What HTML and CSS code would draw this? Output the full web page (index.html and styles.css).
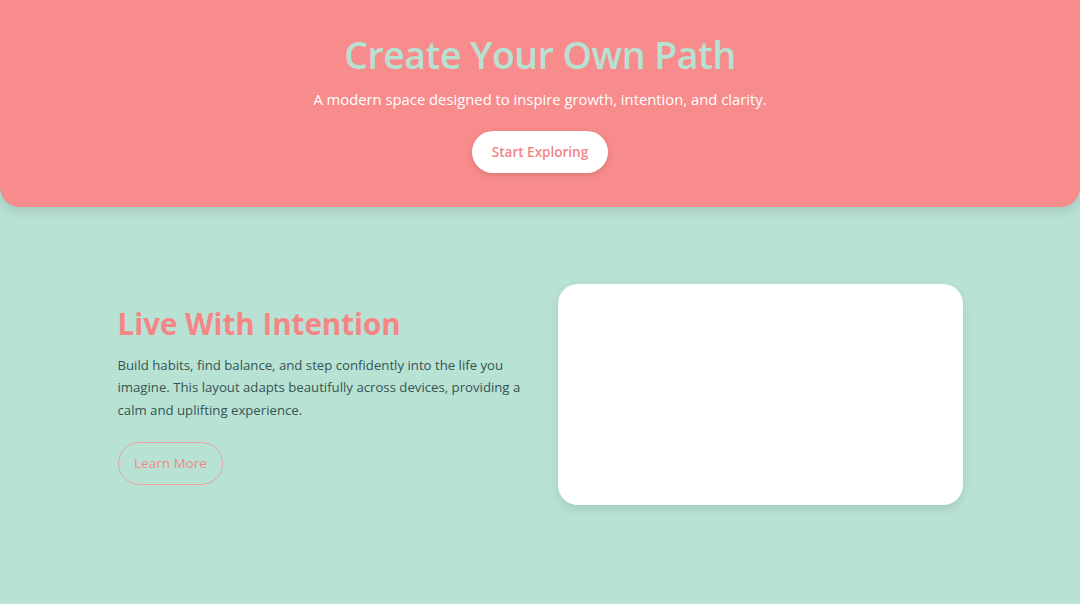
FILE: index.html
```html
<!DOCTYPE html>
<html lang="en">
<head>
  <meta charset="UTF-8" />
  <meta name="viewport" content="width=device-width, initial-scale=1.0"/>
  <title>Create Your Own Path</title>
  <link rel="stylesheet" href="styles.css">
</head>
<body>
  <!-- Bandeau du haut -->
  <header class="hero">
    <h1 class="hero-title">Create Your Own Path</h1>
    <p class="hero-sub">A modern space designed to inspire growth, intention, and clarity.</p>
    <a href="#" class="btn-main">Start Exploring</a>
  </header>

  <!-- Section texte + carte -->
  <section class="feature">
    <div class="feature-inner">
      <div class="feature-text">
        <h2>Live With Intention</h2>
        <p>Build habits, find balance, and step confidently into the life you imagine. This layout adapts beautifully across devices, providing a calm and uplifting experience.</p>
        <a href="#" class="btn-outline">Learn More</a>
      </div>
      <div class="feature-card"></div>
    </div>
  </section>
</body>
</html>
```

FILE: styles.css
```css
/* Couleurs et police de base */
body {
  margin: 0;
  font-family: "Open Sans", "Noto Sans", sans-serif;
  background-color: #b8e2d4;
}

/* Bandeau corail avec coins arrondis en bas */
.hero {
  background-color: #f88b8b;
  text-align: center;
  padding: 28px 20px 34px;
  border-radius: 0 0 20px 20px;
  box-shadow: 0 4px 10px rgba(0, 0, 0, 0.12);
}

.hero-title {
  margin: 0;
  font-size: 37.5px;
  font-weight: 600;
  line-height: 53px;
  color: #b5e2d3;
  letter-spacing: -0.5px;
}

.hero-sub {
  margin: 5px 0 19px;
  font-size: 14.8px;
  line-height: 26px;
  color: #ffffff;
}

/* Bouton blanc en forme de pilule */
.btn-main {
  display: inline-block;
  background-color: #fff;
  color: #f08585;
  text-decoration: none;
  font-size: 13.5px;
  font-weight: 600;
  padding: 0 20px;
  height: 42px;
  line-height: 42px;
  border-radius: 21px;
  box-shadow: 0 2px 6px rgba(0, 0, 0, 0.12);
}

/* Section principale */
.feature {
  padding: 77px 0 99px;
}

.feature-inner {
  max-width: 845px;
  margin: 0 auto;
  display: grid;
  grid-template-columns: 1fr 1fr;
  gap: 36px;
  align-items: center;
}

.feature-text h2 {
  margin: 0 0 10px;
  font-size: 29.5px;
  font-weight: 700;
  line-height: 40px;
  color: #f48686;
}

.feature-text p {
  margin: 0 0 21px;
  font-size: 13.2px;
  line-height: 22.5px;
  color: #355452;
}

/* Bouton à bordure seulement */
.btn-outline {
  display: inline-block;
  border: 1px solid #e8a0a0;
  color: #f08888;
  text-decoration: none;
  font-size: 13.5px;
  padding: 0 15.5px;
  height: 41px;
  line-height: 41px;
  border-radius: 22px;
}

/* Carte blanche à droite */
.feature-card {
  height: 221px;
  background-color: #fff;
  border-radius: 20px;
  box-shadow: 0 4px 10px rgba(0, 0, 0, 0.1);
}
```
